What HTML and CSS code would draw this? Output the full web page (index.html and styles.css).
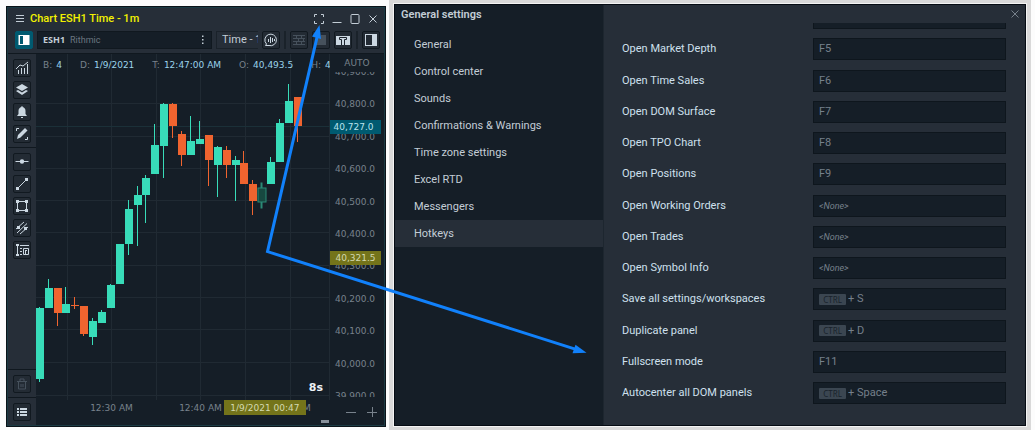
FILE: index.html
```html
<!DOCTYPE html>
<html lang="en">
<head>
    <meta charset="utf-8">
    <title>Chart and hotkeys</title>
    <link rel="stylesheet" href="styles.css">
</head>
<body>
<div class="desk">
    <section class="chart">
        <header class="titlebar">
            <button class="plain" aria-label="Menu"><svg viewBox="0 0 12 12"><path d="M2 2.500h8M2 5.500h8M2 8.500h8"/></svg></button>
            <h1>Chart ESH1 Time - 1m</h1>
            <button class="plain" aria-label="Fullscreen"><svg viewBox="0 0 12 12"><path d="M1.500 4V1.500H4M8 1.500h2.500V4M10.500 8v2.500H8M4 10.500H1.500V8"/></svg></button>
            <button class="plain" aria-label="Minimize"><svg viewBox="0 0 12 12"><path d="M1.500 9.500h9"/></svg></button>
            <button class="plain" aria-label="Maximize"><svg viewBox="0 0 12 12"><rect x="2" y="1.500" width="8" height="9" rx="1"/></svg></button>
            <button class="plain" aria-label="Close"><svg viewBox="0 0 12 12"><path d="M2.500 2.500l7 7M9.500 2.500l-7 7"/></svg></button>
        </header>
        <div class="toolbar">
            <button class="tool active" aria-label="Toggle sidebar"><svg viewBox="0 0 16 16"><path class="fill" d="M2.500 3h11v10h-11z"/><path class="hole" d="M4 4h3v8H4z"/></svg></button>
            <div class="symbol">
                <label for="symbol" class="code">ESH1</label>
                <input id="symbol" type="text" value="Rithmic">
                <button class="plain" aria-label="More"><svg viewBox="0 0 12 12"><path class="fill" d="M5 1.500h1.500V3H5zM5 5h1.500v1.500H5zM5 8.500h1.500V10H5z"/></svg></button>
            </div>
            <select class="period" aria-label="Period"><option>Time - 1m</option></select>
            <button class="tool" aria-label="Chart style"><svg viewBox="0 0 16 16"><path d="M3.500 12A5.800 5.800 0 1 1 6 13.500H2.500z"/><path d="M5.500 7v3M7.500 5v6M9.500 6v4M11.500 7v2"/></svg></button>
            <i class="split"></i>
            <button class="tool dim" aria-label="Order entry"><svg viewBox="0 0 16 16"><path d="M2 3.500h12M2 6.500h12M2 9.500h12M2 12.500h12M5.500 3v3M10.500 3v3M7.500 6v3M12.500 6v3M5.500 9v3M10.500 9v3"/></svg></button>
            <button class="tool dim" aria-label="Orders"><svg viewBox="0 0 16 16"><path class="fill" d="M3 6h4l1-3h5v10H3z"/></svg></button>
            <button class="tool" aria-label="Time and sales"><svg viewBox="0 0 16 16"><path class="fill" d="M1 4h14v9H1z"/><path class="cut" d="M4.500 5.500h7v2h-2V13M6.500 13V7.500h-2v-2"/></svg></button>
            <i class="split"></i>
            <button class="tool" aria-label="Right panel"><svg viewBox="0 0 16 16"><rect x="2.500" y="2.500" width="11" height="11"/><path class="fill" d="M9 2h5v12H9z"/></svg></button>
        </div>
        <div class="work">
            <aside class="side">
                <div class="group">
                    <button class="tool" aria-label="Indicators"><svg viewBox="0 0 16 16"><path d="M4.500 10v4M7.500 8v6M10.500 8v6M13.500 4v10"/><path d="M2 9l4-4 3 1 5-4"/></svg></button>
                    <button class="tool" aria-label="Layers"><svg viewBox="0 0 16 16"><path class="fill" d="M8 2l6 3.500L8 9 2 5.500zM2 9l2-1 4 2.500L12 8l2 1-6 4z"/></svg></button>
                    <button class="tool" aria-label="Alerts"><svg viewBox="0 0 16 16"><path class="fill" d="M7.500 2h1v1c2 .5 3 2 3 4v3l1.500 2H3l1.500-2V7c0-2 1-3.500 3-4zM7 13h2v1H7z"/></svg></button>
                    <button class="tool" aria-label="Draw"><svg viewBox="0 0 16 16"><path d="M2.500 5V2.500H5M13.500 11v2.500H11"/><path class="fill" d="M3 13l1-4 7-7 2.500 2.500-7 7z"/></svg></button>
                </div>
                <div class="group grow">
                    <button class="tool" aria-label="Horizontal line"><svg viewBox="0 0 16 16"><path d="M1.500 7.500h13"/><circle class="fill" cx="8" cy="7.500" r="2.200"/></svg></button>
                    <button class="tool" aria-label="Trend line"><svg viewBox="0 0 16 16"><path d="M3.500 12.500l9-9"/><path class="fill" d="M2 11h3v3H2zM11 2h3v3h-3z"/></svg></button>
                    <button class="tool" aria-label="Rectangle"><svg viewBox="0 0 16 16"><rect x="3.500" y="3.500" width="9" height="9"/><path class="fill" d="M2 2h3v3H2zM11 2h3v3h-3zM2 11h3v3H2zM11 11h3v3h-3z"/></svg></button>
                    <button class="tool" aria-label="Channel"><svg viewBox="0 0 16 16"><path d="M2 9l8-7M6 14l8-7M3 13L13 3.500"/><path class="fill" d="M3 6h3v3H3zM10 7h3v3h-3z"/></svg></button>
                    <button class="tool" aria-label="Volume profile"><svg viewBox="0 0 16 16"><path d="M3.500 3v10M6 3.500h9M6 6.500h2M6 9.500h2M6 12.500h2"/><path d="M9.500 6.500h5v6h-5zM11 8.500h2M11.500 8v4"/><path class="fill" d="M2 2h3v2H2zM2 12h3v2H2z"/></svg></button>
                </div>
                <div class="group">
                    <button class="tool dim" aria-label="Delete"><svg viewBox="0 0 16 16"><path d="M3 5.500h10M6 5V3h4v2M4.500 6v7h7V6M7 8v3M9 8v3"/></svg></button>
                </div>
                <div class="group">
                    <button class="tool" aria-label="Object list"><svg viewBox="0 0 16 16"><path class="fill" d="M3 4h2v2H3zM6 4h7v2H6zM3 7h2v2H3zM6 7h7v2H6zM3 10h2v2H3zM6 10h7v2H6z"/></svg></button>
                </div>
            </aside>
            <div class="stage">
                <div class="plot">
                    <svg id="candles" viewBox="36 54 294 346" preserveAspectRatio="none">
                        <path class="grid" d="M67.500 54V400M111.500 54V400M156.500 54V400M200.500 54V400M245.500 54V400M290.500 54V400M329.500 54V400"/>
                        <path class="grid" d="M36 103.500H330M36 136.500H330M36 168.500H330M36 200.500H330M36 232.500H330M36 265.500H330M36 297.500H330M36 329.500H330M36 362.500H330M36 395.500H330"/>
                        <path class="last" d="M36 126.500H330"/>
                    </svg>
                    <dl class="info">
                        <div><dt>B:</dt><dd>4</dd></div>
                        <div><dt>D:</dt><dd>1/9/2021</dd></div>
                        <div><dt>T:</dt><dd>12:47:00 AM</dd></div>
                        <div><dt>O:</dt><dd>40,493.5</dd></div>
                        <div><dt>H:</dt><dd>4</dd></div>
                    </dl>
                    <b class="countdown">8s</b>
                </div>
                <div class="prices">
                    <button class="auto">AUTO</button>
                    <div class="clip">
                        <ul>
                            <li>40,900.0</li>
                            <li>40,800.0</li>
                            <li>40,700.0</li>
                            <li>40,600.0</li>
                            <li>40,500.0</li>
                            <li>40,400.0</li>
                            <li>40,300.0</li>
                            <li>40,200.0</li>
                            <li>40,100.0</li>
                            <li>40,000.0</li>
                            <li>39,900.0</li>
                        </ul>
                    </div>
                    <span class="tag current">40,727.0</span>
                    <span class="tag cursor">40,321.5</span>
                </div>
                <div class="times">
                    <span>12:30 AM</span>
                    <span>12:40 AM</span>
                    <span>12:50 AM</span>
                    <span class="tag moment">1/9/2021 00:47</span>
                    <i class="thumb"></i>
                    <div class="scale">
                        <button class="plain" aria-label="Zoom out"><svg viewBox="0 0 12 12"><path d="M1 6.500h10"/></svg></button>
                        <button class="plain" aria-label="Zoom in"><svg viewBox="0 0 12 12"><path d="M1 6.500h10M6.500 1v10"/></svg></button>
                    </div>
                </div>
            </div>
        </div>
    </section>

    <section class="settings">
        <nav>
            <h2>General settings</h2>
            <a href="#">General</a>
            <a href="#">Control center</a>
            <a href="#">Sounds</a>
            <a href="#">Confirmations &amp; Warnings</a>
            <a href="#">Time zone settings</a>
            <a href="#">Excel RTD</a>
            <a href="#">Messengers</a>
            <a href="#" class="on">Hotkeys</a>
        </nav>
        <div class="pane">
            <button class="plain close" aria-label="Close settings"><svg viewBox="0 0 12 12"><path d="M2.500 2.500l7 7M9.500 2.500l-7 7"/></svg></button>
            <form class="keys">
                <div class="row"><span></span><div class="field"><input type="text" aria-label="Hotkey"></div></div>
                <div class="row"><label for="k1">Open Market Depth</label><div class="field"><input id="k1" type="text" value="F5"></div></div>
                <div class="row"><label for="k2">Open Time Sales</label><div class="field"><input id="k2" type="text" value="F6"></div></div>
                <div class="row"><label for="k3">Open DOM Surface</label><div class="field"><input id="k3" type="text" value="F7"></div></div>
                <div class="row"><label for="k4">Open TPO Chart</label><div class="field"><input id="k4" type="text" value="F8"></div></div>
                <div class="row"><label for="k5">Open Positions</label><div class="field"><input id="k5" type="text" value="F9"></div></div>
                <div class="row"><label for="k6">Open Working Orders</label><div class="field"><input id="k6" type="text" placeholder="&lt;None&gt;"></div></div>
                <div class="row"><label for="k7">Open Trades</label><div class="field"><input id="k7" type="text" placeholder="&lt;None&gt;"></div></div>
                <div class="row"><label for="k8">Open Symbol Info</label><div class="field"><input id="k8" type="text" placeholder="&lt;None&gt;"></div></div>
                <div class="row"><label for="k9">Save all settings/workspaces</label><div class="field"><kbd>CTRL</kbd><input id="k9" type="text" value="+ S"></div></div>
                <div class="row"><label for="k10">Duplicate panel</label><div class="field"><kbd>CTRL</kbd><input id="k10" type="text" value="+ D"></div></div>
                <div class="row"><label for="k11">Fullscreen mode</label><div class="field"><input id="k11" type="text" value="F11"></div></div>
                <div class="row"><label for="k12">Autocenter all DOM panels</label><div class="field"><kbd>CTRL</kbd><input id="k12" type="text" value="+ Space"></div></div>
            </form>
        </div>
    </section>

    <svg class="arrows" viewBox="0 0 1035 430" preserveAspectRatio="none">
        <path class="line" d="M317.500 35L267.500 251 576 348.500"/>
        <path class="head" d="M319.500 25l1.500 14-9-2.500zM586.500 352l-14 .5 3-8.500z"/>
    </svg>
</div>
<script>
    // x, body top, body bottom, wick top, wick bottom, direction
    var data = [
        [36, 308, 379, 307, 382, "up"],
        [45, 288, 308, 279, 308, "up"],
        [54, 288, 313, 288, 326, "down"],
        [62, 304, 313, 287, 313, "up"],
        [71, 305, 306, 297, 309, "down"],
        [80, 306, 334, 306, 336, "down"],
        [89, 321, 337, 318, 345, "up"],
        [98, 312, 323, 310, 323, "up"],
        [107, 285, 308, 284, 308, "up"],
        [116, 244, 284, 244, 284, "up"],
        [125, 209, 244, 200, 255, "up"],
        [134, 195, 205, 186, 246, "up"],
        [142, 178, 195, 175, 223, "up"],
        [151, 145, 174, 124, 174, "up"],
        [160, 104, 146, 103, 178, "up"],
        [169, 104, 126, 103, 138, "down"],
        [178, 134, 155, 131, 166, "down"],
        [187, 141, 155, 116, 155, "up"],
        [196, 139, 144, 121, 144, "up"],
        [205, 135, 160, 135, 186, "down"],
        [214, 147, 165, 146, 197, "up"],
        [223, 150, 165, 146, 178, "down"],
        [232, 160, 165, 156, 201, "up"],
        [240, 163, 184, 151, 184, "down"],
        [249, 184, 201, 180, 215, "down"],
        [258, 188, 202, 183, 208, "hollow"],
        [267, 162, 184, 157, 184, "up"],
        [276, 123, 162, 119, 162, "up"],
        [285, 101, 123, 84, 123, "up"],
        [294, 97, 126, 97, 142, "down"]
    ];
    var svg = document.getElementById("candles");

    function bar(x, y, w, h, cls) {
        var r = document.createElementNS("http://www.w3.org/2000/svg", "rect");
        r.setAttribute("x", x);
        r.setAttribute("y", y);
        r.setAttribute("width", w);
        r.setAttribute("height", h);
        r.setAttribute("class", cls);
        svg.appendChild(r);
    }

    for (var i = 0; i < data.length; i++) {
        var d = data[i];
        bar(d[0] + 3, d[3], 1, d[4] - d[3], d[5]);
        bar(d[0], d[1], 8, d[2] - d[1], d[5]);
    }
</script>
</body>
</html>
```
FILE: styles.css
```css
* {
    box-sizing: border-box;
    margin: 0;
    padding: 0;
}
body {
    background: #fcfcfc;
    font: 11px/16px Roboto, "Noto Sans", sans-serif;
    color: #c3cdd6;
}
button, input, select {
    font: inherit;
    color: inherit;
    background: none;
    border: 0;
    outline: 0;
}
ul {
    list-style: none;
}
a {
    color: inherit;
    text-decoration: none;
}
.desk {
    position: relative;
    display: grid;
    grid-template-columns: minmax(0, 380fr) minmax(0, 632fr);
    gap: 8px;
    min-height: 100vh;
    padding: 4px 9px 4px 6px;
}

/* icons */
svg {
    display: block;
    fill: none;
    stroke: currentColor;
}
svg .fill {
    fill: currentColor;
    stroke: none;
}
svg .hole {
    fill: #005a70;
    stroke: none;
}
svg .cut {
    stroke: #1b232c;
}
.plain {
    flex: none;
    width: 12px;
    height: 12px;
}
.tool {
    flex: none;
    width: 18px;
    height: 18px;
    border: 1px solid #111920;
    border-radius: 2px;
    background: #232b34;
    color: #ccd8e2;
}
.tool svg {
    width: 16px;
    height: 16px;
}
.tool.active {
    background: #005a70;
    border-color: #005a70;
    color: #fff;
}
.tool.dim {
    color: #46515c;
}

/* chart window */
.chart {
    display: flex;
    flex-direction: column;
    margin-top: 2px;
    background: #151e27;
    border: 1px solid #0b1319;
    box-shadow: inset 0 0 0 1px #1b3a43;
    padding: 1px;
}
.titlebar {
    display: flex;
    align-items: center;
    gap: 6px;
    height: 22px;
    padding: 0 5px 0 6px;
    background: #262e38;
}
.titlebar h1 {
    flex: 1;
    font-size: 11px;
    font-weight: 500;
    color: #f2f200;
    margin-left: -2px;
}
.toolbar {
    display: flex;
    align-items: center;
    gap: 4px;
    height: 24px;
    padding: 0 4px 3px 7px;
    background: #262e38;
    border-bottom: 1px solid #10181f;
}
.symbol {
    display: flex;
    align-items: center;
    flex: 1;
    min-width: 0;
    height: 18px;
    padding: 0 2px 0 5px;
    border: 1px solid #10181f;
    background: #151e27;
}
.symbol .code {
    font: 700 9px/16px "Noto Sans", sans-serif;
}
.symbol input {
    flex: 1;
    min-width: 0;
    margin-left: 5px;
    font-size: 9px;
    color: #6b7680;
}
.period {
    width: 42px;
    height: 18px;
    padding-left: 5px;
    border: 1px solid #1a222a;
    border-right: 0;
    appearance: none;
    overflow: hidden;
}
.split {
    width: 2px;
    height: 18px;
    background: #1a222a;
}
.work {
    display: flex;
    flex: 1;
}
.side {
    display: flex;
    flex-direction: column;
    flex: none;
    width: 28px;
    background: #262e38;
}
.group {
    display: flex;
    flex-direction: column;
    align-items: center;
    gap: 4px;
    padding: 5px 0 4px;
    border-bottom: 1px solid #10181f;
}
.group:last-child {
    border-bottom: 0;
}
.grow {
    flex: 1;
}
.stage {
    display: grid;
    grid-template-columns: minmax(0, 1fr) 54px;
    grid-template-rows: 1fr 25px;
    flex: 1;
    min-width: 0;
    font: 9px/13px "DejaVu Sans", sans-serif;
    color: #78828c;
}
.plot {
    position: relative;
    min-height: 346px;
}
#candles {
    position: absolute;
    width: 100%;
    height: 100%;
    stroke: none;
}
#candles .grid {
    stroke: #202a33;
}
#candles .last {
    stroke: #1b3038;
}
.up {
    fill: #38dcb9;
}
.down {
    fill: #f0642f;
}
.hollow {
    fill: #174840;
    stroke: #2b8a76;
}
.info {
    position: relative;
    display: flex;
    gap: 18px;
    padding: 5px 0 0 7px;
    white-space: nowrap;
    overflow: hidden;
}
.info div {
    display: flex;
    gap: 4px;
}
.info dd {
    color: #9bd3ea;
}
.countdown {
    position: absolute;
    right: 7px;
    bottom: 6px;
    font-size: 11px;
    color: #eef3f6;
}
.prices {
    position: relative;
    display: flex;
    flex-direction: column;
}
.auto {
    height: 18px;
}
.clip {
    display: flex;
    flex: 1;
    margin-bottom: 3px;
    overflow: hidden;
}
.clip ul {
    display: flex;
    flex-direction: column;
    margin: -16px 0;
}
.clip li {
    display: flex;
    flex: 1;
    align-items: center;
    padding-left: 5px;
}
.tag {
    position: absolute;
    height: 14px;
    line-height: 14px;
    color: #d3d9b0;
    background: #74741a;
    text-align: center;
}
.prices .tag {
    left: 0;
    width: 51px;
}
.prices .current {
    top: 19%;
    padding-right: 4px;
    background: #005a70;
    color: #b9e4ee;
}
.cursor {
    top: 57%;
}
.times {
    position: relative;
    grid-column: 1 / 3;
    display: grid;
    grid-template-columns: 89fr 89fr 89fr 50fr;
    padding: 2px 0 0 31px;
    text-align: center;
}
.moment {
    left: 54%;
    width: 82px;
    height: 15px;
    line-height: 16px;
}
.scale {
    display: flex;
    justify-content: flex-end;
    gap: 9px;
    padding: 4px 6px 0 0;
}
.thumb {
    position: absolute;
    left: 82%;
    bottom: 2px;
    width: 8px;
    height: 3px;
    background: #87909a;
}

/* settings window */
.settings {
    display: grid;
    grid-template-columns: 209px 1fr;
    margin-bottom: 1px;
    border: 1px solid #060c14;
    background: #262e38;
    box-shadow: 0 0 0 1px #f4f4f4, 0 0 0 5px #d9d9d9;
}
.settings nav {
    background: #151e27;
    border-right: 1px solid #1d262f;
}
.settings h2 {
    height: 26px;
    padding-left: 6px;
    font-size: 11px;
    line-height: 20px;
    font-weight: 600;
}
.settings nav a {
    display: block;
    height: 27px;
    padding-left: 19px;
    line-height: 27px;
}
.settings nav .on {
    background: #262e38;
}
.pane {
    position: relative;
    padding: 18px 19px 21px 18px;
    display: flex;
}
.close {
    position: absolute;
    top: 3px;
    right: 4px;
    color: #77818b;
}
.keys {
    flex: 1;
    display: flex;
    flex-direction: column;
    justify-content: space-between;
    overflow: hidden;
}
.row {
    display: flex;
    align-items: center;
    justify-content: space-between;
    color: #cfe0ee;
}
.row:first-child {
    margin-top: -16px;
}
.field {
    display: flex;
    align-items: center;
    width: 193px;
    height: 22px;
    padding-left: 5px;
    border: 1px solid #0e161d;
    background: #151e27;
    color: #75808b;
}
.field input {
    flex: 1;
    min-width: 0;
}
.field input::placeholder {
    color: #75808b;
    font-size: 9px;
    font-style: italic;
}
kbd {
    width: 27px;
    height: 11px;
    margin-right: 2px;
    border-radius: 1px;
    background: #3b4651;
    color: #18222b;
    font: 8px/11px "Noto Sans", sans-serif;
    text-align: center;
}

/* callout arrows over both windows */
.arrows {
    position: absolute;
    width: 100%;
    height: 100%;
    pointer-events: none;
}
.arrows .line {
    stroke: #1181fb;
    stroke-width: 3;
}
.arrows .head {
    fill: #1181fb;
    stroke: none;
}
```
